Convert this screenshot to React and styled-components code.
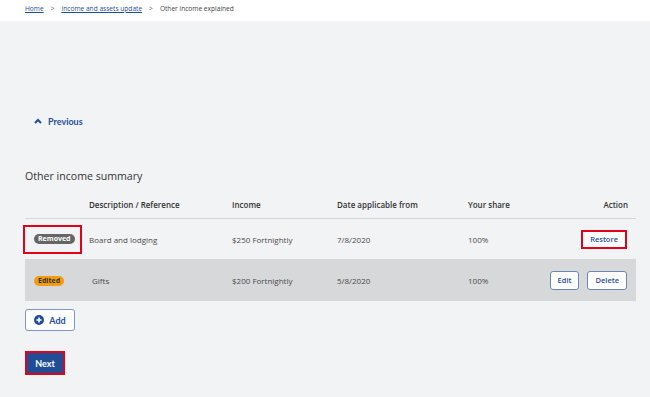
import React from 'react';
import styled, { createGlobalStyle } from 'styled-components';

const Global = createGlobalStyle`
  html, body { margin: 0; padding: 0; }
  body {
    background: #f2f3f5;
    font-family: "Open Sans", "Liberation Sans", sans-serif;
    color: #333;
  }
`;

const blue = '#1f4e96';
const red = '#e3001b';

const rows = [
  { status: 'Removed', desc: 'Board and lodging', income: '$250 Fortnightly', date: '7/8/2020', share: '100%', removed: true },
  { status: 'Edited', desc: 'Gifts', income: '$200 Fortnightly', date: '5/8/2020', share: '100%', removed: false },
];

export default function App() {
  return (
    <>
      <Global />
      <TopBar>
        <Crumb href="#">Home</Crumb>
        <Sep>&gt;</Sep>
        <Crumb href="#">Income and assets update</Crumb>
        <Sep>&gt;</Sep>
        <Current>Other income explained</Current>
      </TopBar>
      <Main>
        <PrevLink href="#">
          <svg width="8" height="6" viewBox="0 0 8 6">
            <path d="M1 5 L4 2 L7 5" fill="none" stroke={blue} strokeWidth="2" />
          </svg>
          Previous
        </PrevLink>
        <Title>Other income summary</Title>
        <Table>
          <HeadRow>
            <Cell />
            <HeadCell>Description / Reference</HeadCell>
            <HeadCell>Income</HeadCell>
            <HeadCell>Date applicable from</HeadCell>
            <HeadCell>Your share</HeadCell>
            <HeadCell $right>Action</HeadCell>
          </HeadRow>
          {rows.map((r) => (
            <Row key={r.desc} $shaded={!r.removed}>
              <Cell>
                {r.removed ? (
                  <Highlight><Badge $kind="removed">{r.status}</Badge></Highlight>
                ) : (
                  <Badge $kind="edited">{r.status}</Badge>
                )}
              </Cell>
              <Cell $shift={!r.removed}>{r.desc}</Cell>
              <Cell>{r.income}</Cell>
              <Cell>{r.date}</Cell>
              <Cell>{r.share}</Cell>
              <ActionCell>
                {r.removed ? (
                  <SmallButton $flagged>Restore</SmallButton>
                ) : (
                  <>
                    <SmallButton>Edit</SmallButton>
                    <SmallButton>Delete</SmallButton>
                  </>
                )}
              </ActionCell>
            </Row>
          ))}
        </Table>
        <AddButton>
          <svg width="10" height="10" viewBox="0 0 10 10">
            <circle cx="5" cy="5" r="5" fill={blue} />
            <path d="M5 2.4 V7.6 M2.4 5 H7.6" stroke="#fff" strokeWidth="1.6" />
          </svg>
          Add
        </AddButton>
        <NextFrame>
          <NextButton>Next</NextButton>
        </NextFrame>
      </Main>
    </>
  );
}

const TopBar = styled.div`
  background: #fff;
  height: 21px;
  display: flex;
  align-items: center;
  padding: 0 0 4px 25px;
  box-sizing: border-box;
  font-size: 6.6px;
  gap: 7px;
`;

const Crumb = styled.a`
  color: ${blue};
  text-decoration: underline;
`;

const Sep = styled.span`
  color: #555;
`;

const Current = styled.span`
  color: #444;
`;

const Main = styled.div`
  padding: 93px 14px 0 25px;
  display: flex;
  flex-direction: column;
  align-items: flex-start;
`;

const PrevLink = styled.a`
  display: flex;
  align-items: center;
  gap: 6px;
  margin-left: 9px;
  color: ${blue};
  font-family: Lato, "Open Sans", sans-serif;
  font-weight: 700;
  font-size: 9px;
  text-decoration: none;
  height: 14px;
`;

const Title = styled.h2`
  margin: 41px 0 0;
  font-size: 10.6px;
  font-weight: 400;
  color: #333;
`;

const Table = styled.div`
  width: 611px;
  margin-top: 7px;
`;

const grid = `
  display: grid;
  grid-template-columns: 64px 143px 105px 131px 80px 1fr;
  align-items: center;
`;

const HeadRow = styled.div`
  ${grid}
  height: 28px;
  border-bottom: 1px solid #d4d6d9;
`;

const Row = styled.div`
  ${grid}
  height: 40px;
  background: ${(p) => (p.$shaded ? '#d7d8da' : 'transparent')};
  border-bottom: 1px solid #d4d6d9;
  font-size: 8px;
  color: #4a4a4a;
`;

const Cell = styled.div`
  padding-left: ${(p) => (p.$shift ? '3px' : '0')};
  white-space: nowrap;
`;

const HeadCell = styled.div`
  font-size: 8px;
  font-weight: 600;
  color: #333;
  white-space: nowrap;
  text-align: ${(p) => (p.$right ? 'right' : 'left')};
  padding-right: ${(p) => (p.$right ? '8px' : '0')};
`;

const ActionCell = styled.div`
  display: flex;
  justify-content: flex-end;
  gap: 8px;
  padding-right: 9px;
`;

const Highlight = styled.div`
  margin-left: -2px;
  width: 59px;
  height: 29px;
  border: 2px solid ${red};
  box-sizing: border-box;
  display: flex;
  align-items: center;
  padding-left: 9px;
`;

const Badge = styled.span`
  display: inline-block;
  margin-left: ${(p) => (p.$kind === 'edited' ? '9px' : '0')};
  padding: 0 4px;
  height: 10px;
  line-height: 10px;
  border-radius: 5px;
  font-size: 7px;
  font-weight: 700;
  background: ${(p) => (p.$kind === 'edited' ? '#f39c12' : '#666')};
  color: ${(p) => (p.$kind === 'edited' ? '#333' : '#fff')};
`;

const SmallButton = styled.button`
  font-family: "Open Sans", sans-serif;
  font-size: 7.5px;
  font-weight: 600;
  color: ${blue};
  background: #fff;
  height: 19px;
  padding: 0 7px;
  box-sizing: border-box;
  border: ${(p) => (p.$flagged ? `2px solid ${red}` : '1px solid #6a86b3')};
  border-radius: ${(p) => (p.$flagged ? '0' : '3px')};
  cursor: pointer;
`;

const AddButton = styled.button`
  margin-top: 8px;
  width: 50px;
  height: 22px;
  display: flex;
  align-items: center;
  justify-content: center;
  gap: 5px;
  background: #fff;
  border: 1px solid #7d96bd;
  border-radius: 3px;
  color: ${blue};
  font-family: Lato, "Open Sans", sans-serif;
  font-weight: 700;
  font-size: 9px;
  cursor: pointer;
`;

const NextFrame = styled.div`
  margin-top: 20px;
  border: 2px solid ${red};
  display: flex;
`;

const NextButton = styled.button`
  width: 36px;
  height: 20px;
  border: none;
  background: ${blue};
  color: #fff;
  font-family: Lato, "Open Sans", sans-serif;
  font-weight: 700;
  font-size: 9px;
  cursor: pointer;
`;
